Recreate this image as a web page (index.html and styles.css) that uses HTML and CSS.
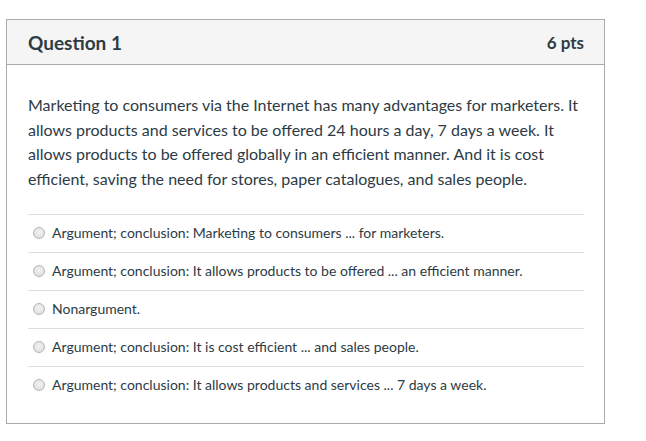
FILE: index.html
```html
<!DOCTYPE html>
<html>
<head>
<meta charset="utf-8">
<link rel="stylesheet" href="styles.css">
</head>
<body>
<div class="question">
  <div class="q-header">
    <span class="q-title">Question 1</span>
    <span class="q-pts">6 pts</span>
  </div>
  <div class="q-body">
    <p class="q-text">Marketing to consumers via the Internet has many advantages for marketers. It allows products and services to be offered 24 hours a day, 7 days a week. It allows products to be offered globally in an efficient manner. And it is cost efficient, saving the need for stores, paper catalogues, and sales people.</p>
    <div class="answers">
      <label class="answer"><span class="radio"></span><span class="a-text">Argument; conclusion: Marketing to consumers ... for marketers.</span></label>
      <label class="answer"><span class="radio"></span><span class="a-text">Argument; conclusion: It allows products to be offered ... an efficient manner.</span></label>
      <label class="answer"><span class="radio"></span><span class="a-text">Nonargument.</span></label>
      <label class="answer"><span class="radio"></span><span class="a-text">Argument; conclusion: It is cost efficient ... and sales people.</span></label>
      <label class="answer"><span class="radio"></span><span class="a-text">Argument; conclusion: It allows products and services ... 7 days a week.</span></label>
    </div>
  </div>
</div>
</body>
</html>
```
FILE: styles.css
```css
* { box-sizing: border-box; }
html, body { margin: 0; padding: 0; background: #fff; }
body {
  font-family: Lato, "Open Sans", sans-serif;
  color: #2d3b45;
  padding: 19px 0 0 6px;
}
.question {
  width: 599px;
  border: 1px solid #aaaaaa;
  background: #fff;
}
.q-header {
  display: flex;
  justify-content: space-between;
  align-items: center;
  height: 45px;
  padding: 0 20px 0 21px;
  background: #f5f5f5;
  border-bottom: 1px solid #aaaaaa;
}
.q-title {
  font-size: 19px;
  font-weight: 700;
}
.q-pts {
  font-size: 17px;
  font-weight: 700;
}
.q-body {
  padding: 28px 20px 19px 21px;
}
.q-text {
  margin: 0 0 22px;
  font-size: 16px;
  line-height: 24.7px;
}
.answers { display: flex; flex-direction: column; }
.answer {
  display: flex;
  align-items: center;
  height: 38px;
  border-top: 1px solid #dddddd;
  font-size: 14px;
  padding-left: 5px;
  padding-bottom: 1px;
}
.radio {
  width: 12px;
  height: 12px;
  border-radius: 50%;
  border: 1px solid #b5b5b5;
  background: radial-gradient(circle at 50% 40%, #f2f2f2 0%, #e2e2e2 70%, #d6d6d6 100%);
  margin-right: 7px;
  flex: none;
}
```
